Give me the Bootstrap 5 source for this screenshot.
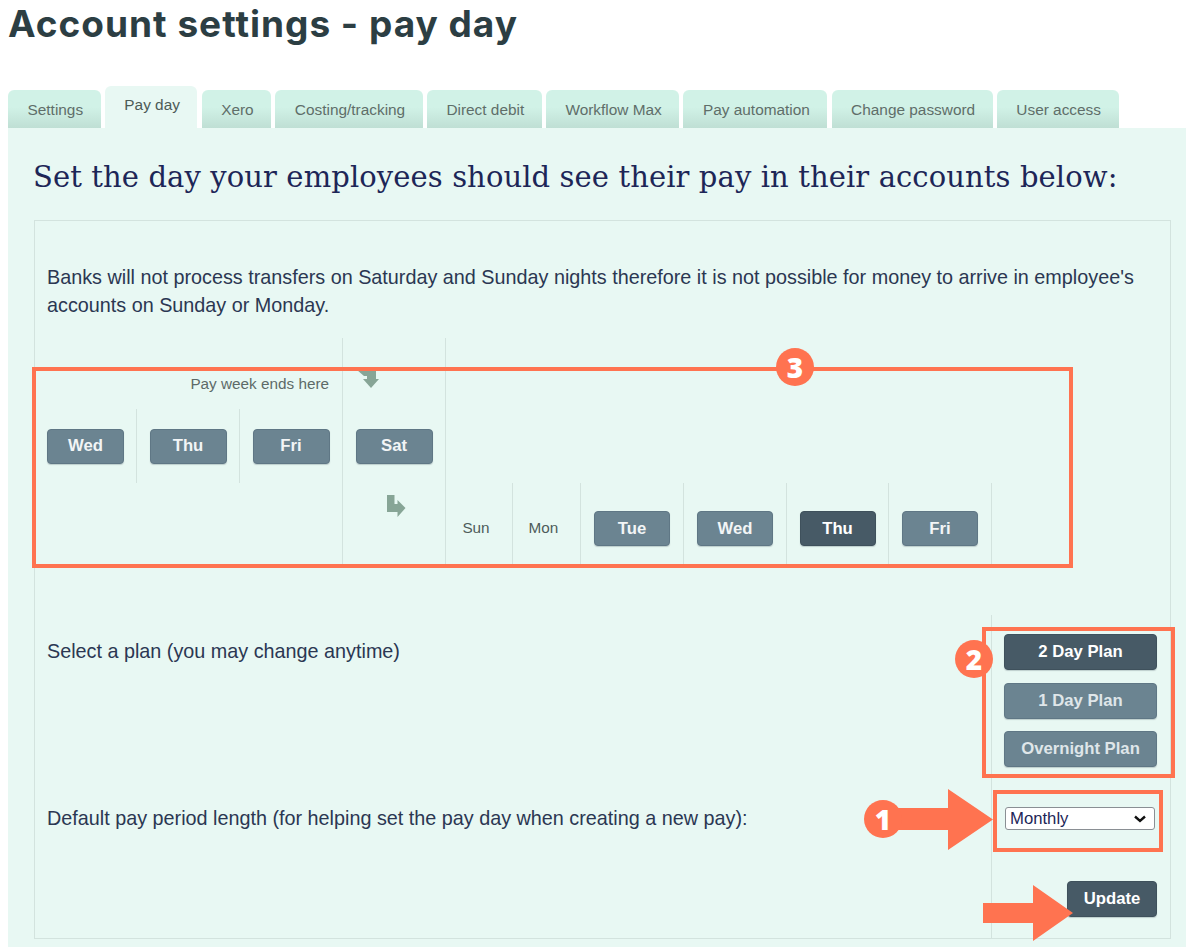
<!DOCTYPE html>
<html lang="en">

<head>
  <meta charset="UTF-8" />
  <meta name="viewport" content="width=device-width, initial-scale=1.0" />
  <title>Account settings - pay day</title>
  <link href="https://cdn.jsdelivr.net/npm/bootstrap@5.3.3/dist/css/bootstrap.min.css" rel="stylesheet">
  <style>
    html, body { height: 947px; overflow: hidden; }
    body { font-family: "Liberation Sans", Arial, sans-serif; color: #2b3752; background: #fff; }
    .page-wrap { position: relative; height: 947px; overflow: hidden; }
    .page-title { font-family: Inter, "Open Sans", sans-serif; font-weight: 700; font-size: 37px; letter-spacing: 1px; line-height: 48px; color: #2c3e43; margin: 0; padding-left: 8px; height: 86px; white-space: nowrap; }

    .pay-tabs { padding-left: 8px; gap: 4.2px; border: 0; align-items: flex-end; height: 42px; flex-wrap: nowrap; }
    .pay-tabs .nav-link { height: 38px; padding: 10px 17.5px 0 19.5px; font-size: 15.4px; line-height: 20px; color: #5f6e69; border: 0; border-radius: 6px 6px 0 0; background: linear-gradient(#d1f2e7 45%, #bfdfd4); white-space: nowrap; }
    .pay-tabs .nav-link.active { height: 42px; padding-top: 9px; color: #4d5b57; background: #e8f8f3; }

    .pay-panel { margin-left: 8px; height: 819px; background: #e8f8f3; padding: 0 15px 0 26px; }
    .panel-title { font-family: "DejaVu Serif", serif; font-weight: 400; font-size: 29px; line-height: 40px; color: #1d2657; margin: 0 0 0 -1px; padding-top: 29px; height: 92px; letter-spacing: .1px; white-space: nowrap; }
    .pay-box { border: 1px solid #d3e3de; height: 719px; }
    .intro-text { font-size: 19.8px; line-height: 28px; margin: 0; padding: 42px 12px 0; height: 117px; }

    .days-wrap { height: 227px; }
    .days-left { width: 307px; flex-shrink: 0; }
    .week-note { height: 71px; padding: 36px 13px 0 0; text-align: right; font-size: 15.3px; line-height: 20px; color: #5d6a68; }
    .day-cell { width: 102px; height: 74px; flex-shrink: 0; border-right: 1px solid #d3e3de; }
    .day-cell + .day-cell { width: 103px; }
    .day-cell:last-child { width: 102px; border-right: 0; }
    .sat-col { width: 104px; flex-shrink: 0; border-left: 1px solid #d3e3de; border-right: 1px solid #d3e3de; }
    .sat-top { height: 71px; padding: 29px 0 0 14px; }
    .sat-mid { height: 74px; }
    .sat-low { padding: 12px 0 0 44px; }
    .days-right { width: 545px; height: 227px; flex-shrink: 0; }
    .low-cell { height: 82px; padding-top: 9px; flex-shrink: 0; border-right: 1px solid #d3e3de; font-size: 15.3px; color: #4e5c5a; }
    .low-cell .day-btn { width: 76px; }
    .w-sun { width: 67px; padding-right: 6px; }
    .w-mon { width: 68px; padding-right: 6px; }
    .w-day { width: 103px; }
    .w-day-narrow { width: 102px; }

    .day-btn, .plan-btn, .update-btn { background: #6b8491; border: 1px solid #5f7785; color: #f2f5f6; font-weight: 700; font-size: 16.7px; border-radius: 4px; padding: 0; box-shadow: 0 1px 1px rgba(60, 80, 90, .25); }
    .day-btn { width: 77px; height: 35px; }
    .plan-btn { width: 153px; height: 36px; color: #dfe6e9; }
    .day-btn.is-on, .plan-btn.is-on, .update-btn { background: #475a66; border-color: #3f515c; color: #fff; }
    .update-btn { width: 90px; height: 36px; }

    .form-spacer { height: 50px; }
    .form-left { width: 956px; font-size: 19.8px; line-height: 28px; padding-left: 12px; }
    .form-right { width: 179px; border-left: 1px solid #d3e3de; padding: 0 13px 0 12px; }
    .plan-row { height: 173px; }
    .plan-row .form-left { padding-top: 22px; }
    .plan-row .form-right { padding-top: 19px; gap: 12.5px; }
    .period-row { height: 72px; }
    .period-row .form-left { padding-top: 16px; }
    .period-row .form-right { padding-top: 19px; }
    .update-row { height: 78px; }
    .update-row .form-right { padding-top: 21px; }
    .period-select.form-select { width: 150px; height: 23px; padding: 0 20px 0 4px; font-family: "Liberation Sans", sans-serif; font-size: 16.7px; line-height: 21px; background-color: #fff; background-image: url("data:image/svg+xml,%3csvg xmlns='http://www.w3.org/2000/svg' viewBox='0 0 12 8'%3e%3cpath fill='none' stroke='%23111' stroke-width='2.400' d='M1 1.500l5 4.500 5-4.500'/%3e%3c/svg%3e"); background-position: right 8px center; background-size: 12px 8px; border: 1px solid #8a8f94; border-radius: 3px; color: #1d2657; margin-left: 1px; }

    /* annotations drawn on top of the screenshot */
    .mark-box { position: absolute; border: 4px solid #ff7350; }
    .mark-3 { left: 32px; top: 367px; width: 1041px; height: 201px; }
    .mark-2 { left: 982px; top: 627px; width: 193px; height: 151px; }
    .mark-1 { left: 993px; top: 790px; width: 170px; height: 62px; }
    .mark-num { position: absolute; width: 38px; height: 38px; border-radius: 50%; background: #ff7350; color: #fff; font-family: "Open Sans", sans-serif; font-weight: 800; font-size: 28px; line-height: 38px; text-align: center; }
    .num-3 { left: 776px; top: 348px; }
    .num-2 { left: 955px; top: 640px; }
    .num-1 { left: 864px; top: 800px; }
    .mark-arrow { position: absolute; }
    .arrow-1 { left: 880px; top: 789px; }
    .arrow-2 { left: 983px; top: 885px; }
  </style>
</head>

<body>
  <div class="page-wrap">
    <h1 class="page-title">Account settings - pay day</h1>

    <!-- Tabs -->
    <ul class="nav pay-tabs">
      <li class="nav-item"><a class="nav-link" href="#">Settings</a></li>
      <li class="nav-item"><a class="nav-link active" href="#">Pay day</a></li>
      <li class="nav-item"><a class="nav-link" href="#">Xero</a></li>
      <li class="nav-item"><a class="nav-link" href="#">Costing/tracking</a></li>
      <li class="nav-item"><a class="nav-link" href="#">Direct debit</a></li>
      <li class="nav-item"><a class="nav-link" href="#">Workflow Max</a></li>
      <li class="nav-item"><a class="nav-link" href="#">Pay automation</a></li>
      <li class="nav-item"><a class="nav-link" href="#">Change password</a></li>
      <li class="nav-item"><a class="nav-link" href="#">User access</a></li>
    </ul>

    <div class="pay-panel">
      <h2 class="panel-title">Set the day your employees should see their pay in their accounts below:</h2>

      <div class="pay-box">
        <p class="intro-text">Banks will not process transfers on Saturday and Sunday nights therefore it is not possible for money to arrive in employee's accounts on Sunday or Monday.</p>

        <!-- Day picker -->
        <div class="days-wrap d-flex">
          <div class="days-left">
            <div class="week-note">Pay week ends here</div>
            <div class="d-flex">
              <div class="day-cell d-flex align-items-center justify-content-center"><button class="btn day-btn">Wed</button></div>
              <div class="day-cell d-flex align-items-center justify-content-center"><button class="btn day-btn">Thu</button></div>
              <div class="day-cell d-flex align-items-center justify-content-center"><button class="btn day-btn">Fri</button></div>
            </div>
          </div>
          <div class="sat-col">
            <div class="sat-top">
              <svg class="d-block" width="22" height="22" viewBox="0 0 22 22"><path d="M0 0H19V12H22L14 21L6 12H10V9H7L0 3Z" fill="#87a596"/></svg>
            </div>
            <div class="sat-mid d-flex align-items-center justify-content-center"><button class="btn day-btn">Sat</button></div>
            <div class="sat-low">
              <svg class="d-block" width="19" height="22" viewBox="0 0 19 22"><path d="M0 0H7.500V9H10.500V5L18.500 13L10.500 22V17H0Z" fill="#87a596"/></svg>
            </div>
          </div>
          <div class="days-right d-flex align-items-end">
            <div class="low-cell w-sun d-flex align-items-center justify-content-center">Sun</div>
            <div class="low-cell w-mon d-flex align-items-center justify-content-center">Mon</div>
            <div class="low-cell w-day d-flex align-items-center justify-content-center"><button class="btn day-btn">Tue</button></div>
            <div class="low-cell w-day d-flex align-items-center justify-content-center"><button class="btn day-btn">Wed</button></div>
            <div class="low-cell w-day-narrow d-flex align-items-center justify-content-center"><button class="btn day-btn is-on">Thu</button></div>
            <div class="low-cell w-day d-flex align-items-center justify-content-center"><button class="btn day-btn">Fri</button></div>
          </div>
        </div>

        <div class="form-spacer"></div>

        <div class="plan-row d-flex">
          <div class="form-left">Select a plan (you may change anytime)</div>
          <div class="form-right d-flex flex-column">
            <button class="btn plan-btn is-on">2 Day Plan</button>
            <button class="btn plan-btn">1 Day Plan</button>
            <button class="btn plan-btn">Overnight Plan</button>
          </div>
        </div>

        <div class="period-row d-flex">
          <div class="form-left">Default pay period length (for helping set the pay day when creating a new pay):</div>
          <div class="form-right">
            <select class="form-select period-select">
              <option>Monthly</option>
              <option>Fortnightly</option>
              <option>Weekly</option>
            </select>
          </div>
        </div>

        <div class="update-row d-flex">
          <div class="form-left"></div>
          <div class="form-right d-flex justify-content-end align-items-start">
            <button class="btn update-btn">Update</button>
          </div>
        </div>
      </div>
    </div>

    <!-- Annotations -->
    <div class="mark-box mark-3"></div>
    <div class="mark-box mark-2"></div>
    <div class="mark-box mark-1"></div>
    <svg class="mark-arrow arrow-1" width="113" height="61" viewBox="0 0 113 61"><path d="M0 19H68V0L113 30.500L68 61V41H0Z" fill="#ff7350"/></svg>
    <svg class="mark-arrow arrow-2" width="90" height="56" viewBox="0 0 90 56"><path d="M0 18H50V0L90 28L50 56V38H0Z" fill="#ff7350"/></svg>
    <div class="mark-num num-3">3</div>
    <div class="mark-num num-2">2</div>
    <div class="mark-num num-1">1</div>
  </div>

  <script src="https://cdn.jsdelivr.net/npm/bootstrap@5.3.3/dist/js/bootstrap.bundle.min.js"></script>
</body>

</html>
